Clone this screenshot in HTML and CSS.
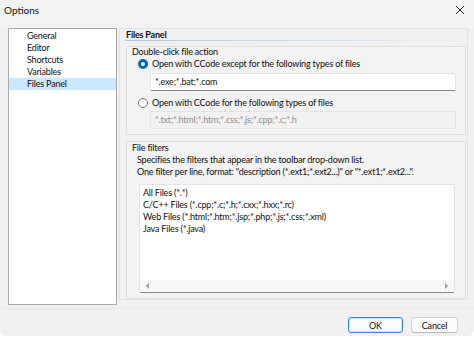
FILE: index.html
```html
<!DOCTYPE html>
<html lang="en">
<head>
    <meta charset="UTF-8">
    <title>Options</title>
    <link rel="stylesheet" href="styles.css">
</head>
<body>
<div class="window">
    <div class="titlebar">
        <span class="title">Options</span>
        <svg class="close" width="10" height="10" viewBox="0 0 10 10">
            <path d="M1 1 L9 9 M9 1 L1 9" stroke="#222" stroke-width="1"/>
        </svg>
    </div>

    <div class="content">
        <ul class="tree">
            <li>General</li>
            <li>Editor</li>
            <li>Shortcuts</li>
            <li>Variables</li>
            <li class="selected">Files Panel</li>
        </ul>

        <div class="panel">
            <div class="panel-title">Files Panel</div>

            <div class="group action-group">
                <div class="group-label">Double-click file action</div>
                <div class="radio-row">
                    <span class="radio checked"></span>
                    Open with CCode except for the following types of files
                </div>
                <div class="field">*.exe;*.bat;*.com</div>
                <div class="radio-row second">
                    <span class="radio"></span>
                    Open with CCode for the following types of files
                </div>
                <div class="field disabled">*.txt;*.html;*.htm;*.css;*.js;*.cpp;*.c;*.h</div>
            </div>

            <div class="group filter-group">
                <div class="group-label">File filters</div>
                <div class="hint">Specifies the filters that appear in the toolbar drop-down list.</div>
                <div class="hint">One filter per line, format: "description (*.ext1;*.ext2...)" or "*.ext1;*.ext2...".</div>
                <div class="editor">
                    <div class="editor-lines">
                        <div>All Files (*.*)</div>
                        <div>C/C++ Files (*.cpp;*.c;*.h;*.cxx;*.hxx;*.rc)</div>
                        <div>Web Files (*.html;*.htm;*.jsp;*.php;*.js;*.css;*.xml)</div>
                        <div>Java Files (*.java)</div>
                    </div>
                    <div class="hscroll">
                        <span class="arrow left"></span>
                        <span class="arrow right"></span>
                    </div>
                </div>
            </div>
        </div>
    </div>

    <div class="footer">
        <button class="btn default">OK</button>
        <button class="btn">Cancel</button>
    </div>
</div>
</body>
</html>
```

FILE: styles.css
```css
body {
    margin: 0;
    padding: 0;
    background: #ffffff;
    font-family: "Lato", "Liberation Sans", sans-serif;
    font-size: 9px;
    letter-spacing: -0.2px;
    color: #111;
}

.window {
    width: 474px;
    height: 336px;
    background: #f0f0f0;
    border-radius: 0 0 6px 6px;
    display: flex;
    flex-direction: column;
    overflow: hidden;
}

.titlebar {
    height: 28px;
    display: flex;
    align-items: flex-start;
    justify-content: space-between;
    padding: 0 9px 0 4px;
    background: #f3f3f3;
}

.title {
    font-size: 10px;
    letter-spacing: 0;
    line-height: 20px;
}

.close {
    margin-top: 5px;
}

.content {
    display: flex;
    align-items: flex-start;
    padding: 0 6px 0 8px;
    gap: 1px;
}

.tree {
    list-style: none;
    margin: 0;
    padding: 1px 0 0 0;
    width: 107px;
    height: 274px;
    background: #fff;
    border: 1px solid #a8a8a8;
}

.tree li {
    line-height: 12px;
    padding-left: 18px;
}

.tree li.selected {
    background: #cce8ff;
}

.panel {
    flex: 1;
    height: 270px;
    margin-left: 1px;
    border: 1px solid #e2e2e2;
    background: #f0f0f0;
}

.panel-title {
    margin: 0 6px 0 5px;
    padding-left: 1px;
    font-weight: 700;
    line-height: 11px;
    border-bottom: 1px solid;
    border-image: linear-gradient(to right, #a9c4e2, #d6e3f0 70%, #f0f0f0) 1;
}

.group {
    margin: 5px 1px 0 6px;
    border: 1px solid #dedede;
    border-radius: 2px;
    background: #f3f3f3;
}

.group-label {
    padding-left: 5px;
    line-height: 10px;
}

.action-group {
    padding: 0 9px 5px 0;
}

.radio-row {
    display: flex;
    align-items: center;
    gap: 4px;
    margin-top: 1px;
    padding-left: 11px;
    line-height: 12px;
}

.radio-row.second {
    margin-top: 6px;
}

.radio {
    width: 10px;
    height: 10px;
    box-sizing: border-box;
    border-radius: 50%;
    border: 1px solid #7a7a7a;
    background: #fafafa;
}

.radio.checked {
    border: 3px solid #0067c0;
    background: #fff;
}

.field {
    margin: 3px 0 0 23px;
    height: 16px;
    line-height: 16px;
    padding-left: 4px;
    background: #fff;
    border: 1px solid #e6e6e6;
    border-bottom-color: #8a8a8a;
    border-radius: 2px;
}

.field.disabled {
    margin-top: 2px;
    background: #f2f2f2;
    border-color: #e4e4e4;
    color: #8f8f8f;
}

.filter-group {
    margin-top: 6px;
    padding: 0 10px 5px 0;
}

.filter-group .group-label {
    line-height: 12px;
}

.hint {
    padding-left: 10px;
    line-height: 12px;
}

.editor {
    margin: 6px 0 0 12px;
    height: 107px;
    background: #fff;
    border: 1px solid #e4e4e4;
    border-bottom-color: #8a8a8a;
    border-radius: 2px;
    display: flex;
    flex-direction: column;
}

.editor-lines {
    flex: 1;
    padding: 2px 0 0 3px;
    line-height: 12px;
    white-space: nowrap;
    overflow: hidden;
}

.hscroll {
    height: 12px;
    background: #f7f7f7;
    display: flex;
    align-items: center;
    justify-content: space-between;
    padding: 0 6px;
}

.arrow {
    width: 0;
    height: 0;
    border-top: 3px solid transparent;
    border-bottom: 3px solid transparent;
}

.arrow.left {
    border-right: 3px solid #9a9a9a;
}

.arrow.right {
    border-left: 3px solid #9a9a9a;
}

.footer {
    flex: 1;
    display: flex;
    justify-content: flex-end;
    align-items: flex-start;
    gap: 8px;
    padding: 8px 16px 0 0;
    border-top: 1px solid #e8e8e8;
    margin-top: 3px;
}

.btn {
    font-family: inherit;
    font-size: 9px;
    letter-spacing: -0.2px;
    height: 16px;
    padding: 0;
    width: 47px;
    background: #fbfbfb;
    border: 1px solid #d0d0d0;
    border-bottom-color: #b8b8b8;
    border-radius: 3px;
    color: #111;
}

.btn.default {
    width: 55px;
    border: 1px solid #3b86d0;
    box-shadow: inset 0 0 0 1px #cfe3f6;
}
```
